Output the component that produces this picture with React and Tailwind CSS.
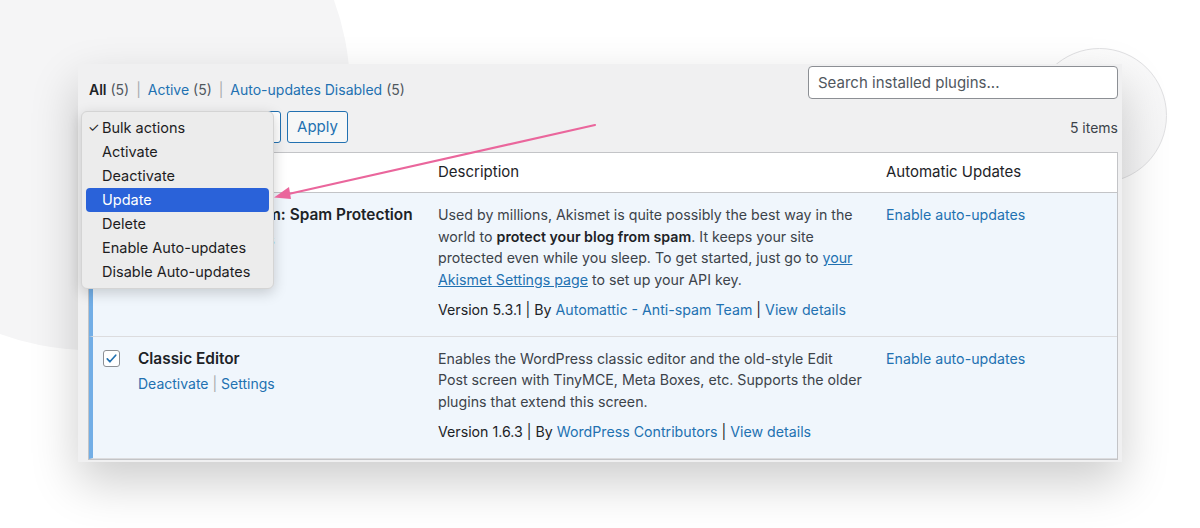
import React from "react";

const font = { fontFamily: "Inter, 'Noto Sans', sans-serif" };

const menuItems = [
  "Bulk actions",
  "Activate",
  "Deactivate",
  "Update",
  "Delete",
  "Enable Auto-updates",
  "Disable Auto-updates",
];

const Checkbox = ({ checked }) => (
  <div className="w-[17px] h-[17px] rounded-[3px] border border-[#8c8f94] bg-white flex items-center justify-center">
    {checked && (
      <svg width="13" height="13" viewBox="0 0 20 20">
        <path d="M3.5 10.5l4 4.5 9-10" fill="none" stroke="#2271b1" strokeWidth="2.6" strokeLinecap="round" strokeLinejoin="round" />
      </svg>
    )}
  </div>
);

const PluginRow = ({ name, checked, children, version, author }) => (
  <div className="grid grid-cols-[45px_300px_448px_1fr] bg-[#f0f6fc] border-b border-[#dcdcde] border-l-4 border-l-[#72aee6] pt-[11px] pb-[15px]">
    <div className="pl-[10px] pt-[2px]">
      <Checkbox checked={checked} />
    </div>
    <div>
      <p className="text-[15.4px] leading-[21px] font-semibold text-[#1d2327]">{name}</p>
      <p className="text-[14px] leading-[21px] mt-[4px] text-[#2271b1]">
        Deactivate <span className="text-[#a7aaad]">|</span> Settings
      </p>
    </div>
    <div className="pr-[20px]">
      <p className="text-[14.2px] leading-[21.5px] text-[#3c434a]">{children}</p>
      <p className="text-[14.2px] leading-[21.5px] mt-[9px] text-[#1d2327]">
        Version {version} | By <span className="text-[#2271b1]">{author}</span> |{" "}
        <span className="text-[#2271b1]">View details</span>
      </p>
    </div>
    <div>
      <p className="text-[14.2px] leading-[21.5px] text-[#2271b1]">Enable auto-updates</p>
    </div>
  </div>
);

export default function App() {
  return (
    <div style={font} className="relative w-[1200px] h-[528px] overflow-hidden bg-white">
      {/* background decorations */}
      <div className="absolute left-[-170px] top-[-170px] w-[520px] h-[520px] rounded-full bg-[#f5f5f6]" />
      <div className="absolute left-[1032px] top-[48px] w-[135px] h-[135px] rounded-full border border-[#e0e0e2] bg-gradient-to-br from-white to-[#f3f3f4]" />

      <div className="relative ml-[78px] mt-[64px] w-[1044px] h-[398px] bg-[#f0f0f1] shadow-[0_20px_45px_rgba(0,0,0,0.2)]">
        <div className="flex justify-between pt-[2px] pr-[4px]">
          <p className="mt-[14px] ml-[11px] text-[14px] leading-[20px] text-[#50575e]">
            <span className="font-semibold text-[#1d2327]">All</span> (5){" "}
            <span className="text-[#a7aaad] mx-[3px]">|</span>{" "}
            <span className="text-[#2271b1]">Active</span> (5){" "}
            <span className="text-[#a7aaad] mx-[3px]">|</span>{" "}
            <span className="text-[#2271b1]">Auto-updates Disabled</span> (5)
          </p>
          <div className="w-[310px] h-[33px] bg-white border border-[#8c8f94] rounded-[4px] flex items-center px-[9px] pt-[2px] text-[15px] text-[#50575e]">
            Search installed plugins...
          </div>
        </div>

        <div className="flex items-center mt-[11px] pl-[9px] pr-[4px]">
          <div className="w-[194px] h-[32px] bg-white border border-[#2271b1] rounded-[3px]" />
          <button className="ml-[6px] w-[61px] h-[32px] bg-[#f6f7f7] border border-[#2271b1] rounded-[3px] text-[15px] text-[#2271b1]">
            Apply
          </button>
          <span className="ml-auto text-[14px] text-[#3c434a]">5 items</span>
        </div>

        <div className="ml-[10px] mr-[4px] mt-[9px] bg-white border border-[#c3c4c7]">
          <div className="grid grid-cols-[49px_300px_448px_1fr] h-[40px] items-center border-b border-[#c3c4c7] text-[15px] text-[#1d2327]">
            <div />
            <div />
            <div>Description</div>
            <div>Automatic Updates</div>
          </div>
          <PluginRow name="Akismet Anti-spam: Spam Protection" version="5.3.1" author="Automattic - Anti-spam Team">
            Used by millions, Akismet is quite possibly the best way in the world to{" "}
            <strong className="font-semibold text-[#1d2327]">protect your blog from spam</strong>. It keeps your site
            protected even while you sleep. To get started, just go to{" "}
            <span className="text-[#2271b1] underline">your Akismet Settings page</span> to set up your API key.
          </PluginRow>
          <PluginRow name="Classic Editor" checked version="1.6.3" author="WordPress Contributors">
            Enables the WordPress classic editor and the old-style Edit Post screen with TinyMCE, Meta Boxes, etc.
            Supports the older plugins that extend this screen.
          </PluginRow>
        </div>

        {/* open select menu */}
        <div className="absolute left-[3px] top-[47px] w-[193px] bg-[#ececec] border border-[#d4d4d4] rounded-[6px] py-[4px] shadow-[0_4px_14px_rgba(0,0,0,0.18)]">
          {menuItems.map((item, i) => (
            <div
              key={item}
              className={
                i === 3
                  ? "relative mx-[4px] h-[24px] rounded-[4px] bg-[#2a62d9] text-white pl-[16px] flex items-center text-[14.5px]"
                  : "relative mx-[4px] h-[24px] pl-[16px] flex items-center text-[14.5px] text-[#1d1d1f]"
              }
            >
              {i === 0 && <span className="absolute left-[2px] text-[13px]">✓</span>}
              {item}
            </div>
          ))}
        </div>
      </div>

      {/* annotation arrow */}
      <svg className="absolute left-0 top-0 pointer-events-none" width="1200" height="528">
        <line x1="595" y1="125" x2="284" y2="195" stroke="#ea669c" strokeWidth="2.2" strokeLinecap="round" />
        <path d="M274 197.5 L289 187 L291 199 Z" fill="#ea669c" />
      </svg>
    </div>
  );
}
